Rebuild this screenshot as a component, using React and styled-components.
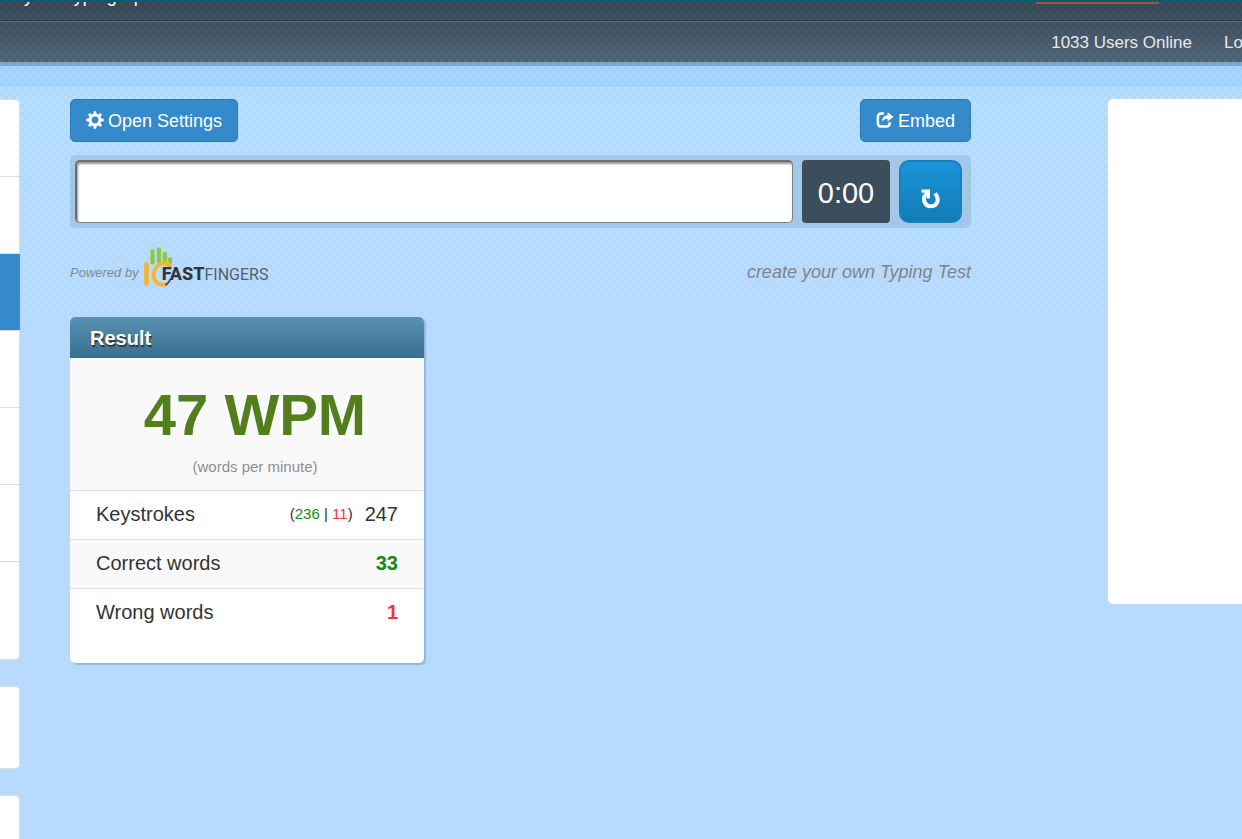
import React from 'react'
import styled, { createGlobalStyle } from 'styled-components'

const checks = (color) => `conic-gradient(${color} 25%, transparent 0 50%, ${color} 0 75%, transparent 0) 0 0 / 8px 8px`

const GlobalStyle = createGlobalStyle`
  * {
    box-sizing: border-box;
  }
  body {
    margin: 0;
    min-height: 100vh;
    overflow: hidden;
    font-family: "Liberation Sans", Arial, sans-serif;
    font-size: 18px;
    color: #333;
    background: linear-gradient(rgba(184, 218, 255, 0) 60px, #b8daff 400px), ${checks('rgba(130, 190, 240, 0.16)')}, #b8dffd;
  }
  a {
    text-decoration: none;
  }
`

const Header = styled.header`
  border-top: 2px solid #00606f;
  background: ${checks('rgba(0, 0, 0, 0.06)')}, linear-gradient(#3a4a57, #52697d);
  box-shadow: 0 4px 0 rgba(60, 90, 120, 0.35);
  position: relative;
`

const TopBar = styled.div`
  display: flex;
  justify-content: space-between;
  align-items: flex-start;
  height: 19px;
  overflow: hidden;
  border-bottom: 1px solid #2b3a47;
`

const Slogan = styled.span`
  margin: -16px 0 0 -14px;
  line-height: 20px;
  color: #fff;
`

const TopTab = styled.span`
  width: 123px;
  height: 2px;
  margin-right: 83px;
  background: #b84a35;
`

const Nav = styled.nav`
  display: flex;
  justify-content: flex-end;
  gap: 32px;
  height: 41px;
  border-top: 1px solid #5b6c79;
  overflow: hidden;
`

const NavLink = styled.a`
  line-height: 41px;
  color: #e8e8e8;
  font-size: 17px;
  white-space: nowrap;
  &:last-child {
    width: 18px;
  }
`

const Band = styled.div`
  height: 25px;
  background: ${checks('rgba(120, 185, 240, 0.16)')}, #a6d5fd;
`

const Page = styled.div`
  display: grid;
  grid-template-columns: 20px minmax(0, 1fr) 134px;
  align-items: start;
  padding-top: 12px;
`

const Sidebar = styled.aside`
  display: flex;
  flex-direction: column;
  gap: 26px;
`

const Box = styled.div`
  height: 83px;
  background: #fff;
  border: 1px solid #ddd;
  border-left: 0;
  border-radius: 0 5px 5px 0;
`

const MenuList = styled(Box)`
  height: 561px;
`

const MenuItem = styled.a`
  display: block;
  height: 77px;
  border-bottom: ${({ $last }) => $last ? 0 : '1px solid #ddd'};
  background: ${({ $active }) => $active ? '#348acb' : 'transparent'};
  margin-right: ${({ $active }) => $active ? '-1px' : 0};
`

const Content = styled.main`
  padding: 0 137px 0 50px;
`

const Toolbar = styled.div`
  display: flex;
  justify-content: space-between;
  margin-bottom: 13px;
`

const Button = styled.button`
  display: flex;
  align-items: center;
  gap: 4px;
  height: 43px;
  padding: 2px 15px 0;
  border: 1px solid #2a7ab8;
  border-radius: 5px;
  background: #348acb;
  color: #fff;
  font: inherit;
  svg {
    margin-bottom: 3px;
  }
`

const TypingBar = styled.div`
  display: flex;
  gap: 9px;
  padding: 5px 9px 5px 5px;
  border-radius: 5px;
  background: #a4c7e8;
`

const WordInput = styled.input`
  flex: 1;
  min-width: 0;
  height: 63px;
  padding: 0 16px;
  border: 1px solid #76828a;
  border-top: 2px solid #6e6e6e;
  border-left: 2px solid #6e6e6e;
  border-radius: 5px;
  background: #fff;
  box-shadow: inset 1px 2px 2px rgba(0, 0, 0, 0.4);
  font: inherit;
  font-size: 30px;
`

const Timer = styled.div`
  width: 88px;
  line-height: 66px;
  height: 63px;
  border-radius: 4px;
  background: #3c4d5c;
  color: #fff;
  font-size: 29px;
  text-align: center;
`

const ReloadButton = styled.button`
  display: flex;
  align-items: center;
  justify-content: center;
  width: 63px;
  height: 63px;
  padding: 14px 0 0;
  border: 2px solid #1580bd;
  border-radius: 10px;
  background: linear-gradient(#1b95da, #127cb6);
  color: #fff;
`

const Credits = styled.div`
  display: flex;
  justify-content: space-between;
  align-items: center;
  height: 89px;
  font-style: italic;
`

const Powered = styled.a`
  display: flex;
  align-items: center;
  gap: 4px;
  font-size: 13px;
  color: #888;
`

const CreateLink = styled.a`
  color: #7f8489;
`

const Logo = styled.span`
  display: flex;
  align-items: center;
  height: 40px;
  margin-top: -12px;
`

const LogoText = styled.span`
  margin: 14px 0 0 -13px;
  color: #54606a;
  font-family: Roboto, sans-serif;
  font-size: 16px;
  font-style: normal;
  font-weight: 400;
  b {
    color: #30363c;
    font-size: 18px;
    font-weight: 800;
  }
`

const ResultCard = styled.section`
  width: 354px;
  border-radius: 5px;
  overflow: hidden;
  background: #fff;
  box-shadow: 2px 2px 1px #8fb9df;
`

const ResultTitle = styled.h3`
  margin: 0;
  padding: 0 20px;
  line-height: 43px;
  height: 41px;
  background: linear-gradient(#5a91b4, #396f8e);
  color: #fff;
  font-size: 20px;
  text-shadow: 1px 2px 1px #333;
`

const ResultTable = styled.table`
  width: 100%;
  margin-bottom: 26px;
  border-collapse: collapse;
  font-size: 20px;
`

const Wpm = styled.td`
  height: 132px;
  padding: 6px 0 0 16px;
  background: #f9f9f9;
  text-align: center;
`

const WpmValue = styled.strong`
  display: block;
  line-height: 80px;
  color: #527f1b;
  font-size: 58px;
`

const WpmNote = styled.small`
  display: block;
  line-height: 24px;
  color: #8a8f94;
  font-size: 15px;
`

const Row = styled.tr`
  height: 49px;
  border-top: 1px solid #ddd;
  background: ${({ $shaded }) => $shaded ? '#f9f9f9' : '#fff'};
`

const Name = styled.th`
  padding: 0 0 0 26px;
  font-weight: 400;
  text-align: left;
`

const Value = styled.td`
  padding: 0 26px 0 0;
  text-align: right;
  color: ${({ $color }) => $color || '#333'};
  font-weight: ${({ $bold }) => $bold ? 700 : 400};
  small {
    margin-right: 12px;
    font-size: 15px;
    vertical-align: 2px;
  }
`

const Good = styled.span`
  color: #128a12;
`

const Bad = styled.span`
  color: #f5333f;
`

const AdBox = styled.aside`
  height: 505px;
  border-radius: 5px 0 0 5px;
  background: #fff;
`

const teeth = [0, 45, 90, 135, 180, 225, 270, 315]

const CogIcon = () => (
  <svg width="18" height="18" viewBox="0 0 18 18" aria-hidden="true">
    <circle cx="9" cy="9" r="4.9" fill="none" stroke="currentColor" strokeWidth="3" />
    {teeth.map((angle) => (
      <path key={angle} d="M7.300 3.500L7.800 0.300h2.400l.5 3.200z" fill="currentColor" transform={`rotate(${angle} 9 9)`} />
    ))}
  </svg>
)

const ShareIcon = () => (
  <svg width="18" height="18" viewBox="0 0 19 18" aria-hidden="true">
    <path d="M8.500 2.200H5.500Q2 2.200 2 5.700V12.300Q2 15.800 5.500 15.800H11Q14.500 15.800 14.500 12.300V11.500" fill="none" stroke="currentColor" strokeWidth="2.600" />
    <path d="M12.300 0.800L18.500 5.500L12.300 10.500V7.600Q8.500 7.300 6.300 11Q6.500 4.400 12.300 3.700z" fill="currentColor" />
  </svg>
)

const ReloadIcon = () => (
  <svg width="22" height="22" viewBox="0 0 22 22" aria-hidden="true">
    <path d="M1.500 1.500H10V10.500H7V7.500L4 9.500L4.500 5L1.500 4.500z" fill="currentColor" />
    <path d="M5 7C2.500 12 5 18.300 11 18.300C17.500 18.300 20 11 15 5.500" fill="none" stroke="currentColor" strokeWidth="4" />
  </svg>
)

const LogoHand = () => (
  <svg width="32" height="40" viewBox="0 0 32 40" aria-hidden="true">
    <g fill="none" strokeLinecap="round">
      <path d="M9.500 4.500v11M16 2.500v12M22 7v8M27 12.500v3" stroke="#93c83e" strokeWidth="4.300" />
      <path d="M3.500 17.500v19" stroke="#f5b62c" strokeWidth="4.600" />
      <path d="M27 18.500C22 14 13 17 11 25C9 34 15 39 23 37.500" stroke="#f5b62c" strokeWidth="3.800" />
      <path d="M23 37.500Q26 36 27 33" stroke="#4b5257" strokeWidth="2" />
    </g>
  </svg>
)

const App = () => {
  return (
    <>
      <GlobalStyle />
      <Header>
        <TopBar>
          <Slogan>Test your Typing Speed</Slogan>
          <TopTab />
        </TopBar>
        <Nav>
          <NavLink href="#users">1033 Users Online</NavLink>
          <NavLink href="#login">Login</NavLink>
        </Nav>
      </Header>
      <Band />
      <Page>
        <Sidebar>
          <MenuList as="nav">
            {[0, 1, 2, 3, 4, 5, 6].map((i) => (
              <MenuItem key={i} href={`#menu-${i}`} $active={i === 2} $last={i === 6} />
            ))}
          </MenuList>
          <Box />
          <Box />
        </Sidebar>
        <Content>
          <Toolbar>
            <Button type="button"><CogIcon />Open Settings</Button>
            <Button type="button"><ShareIcon />Embed</Button>
          </Toolbar>
          <TypingBar>
            <WordInput type="text" aria-label="Type the words" />
            <Timer>0:00</Timer>
            <ReloadButton type="button" aria-label="Restart"><ReloadIcon /></ReloadButton>
          </TypingBar>
          <Credits>
            <Powered href="#home">
              Powered by
              <Logo>
                <LogoHand />
                <LogoText><b>FAST</b>FINGERS</LogoText>
              </Logo>
            </Powered>
            <CreateLink href="#create">create your own Typing Test</CreateLink>
          </Credits>
          <ResultCard>
            <ResultTitle>Result</ResultTitle>
            <ResultTable>
              <tbody>
                <tr>
                  <Wpm colSpan={2}>
                    <WpmValue>47 WPM</WpmValue>
                    <WpmNote>(words per minute)</WpmNote>
                  </Wpm>
                </tr>
                <Row>
                  <Name scope="row">Keystrokes</Name>
                  <Value>
                    <small>(<Good>236</Good> | <Bad>11</Bad>)</small>
                    247
                  </Value>
                </Row>
                <Row $shaded>
                  <Name scope="row">Correct words</Name>
                  <Value $color="#128a12" $bold>33</Value>
                </Row>
                <Row>
                  <Name scope="row">Wrong words</Name>
                  <Value $color="#f5333f" $bold>1</Value>
                </Row>
              </tbody>
            </ResultTable>
          </ResultCard>
        </Content>
        <AdBox />
      </Page>
    </>
  )
}

export default App
